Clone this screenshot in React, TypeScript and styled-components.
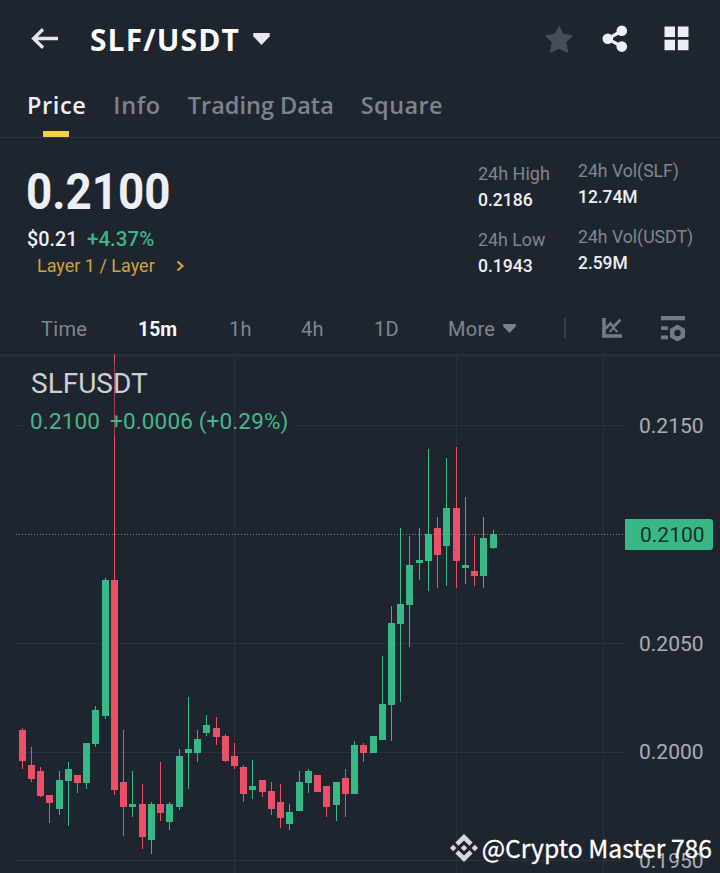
import React from "react";
import styled, { createGlobalStyle } from "styled-components";

const color = {
  bg: "#1f252f",
  white: "#eceff5",
  muted: "#7f8591",
  dim: "#474d59",
  green: "#38b886",
  red: "#ea5066",
  gold: "#cfa33c",
  yellow: "#f3d149",
  grid: "#2b313b",
};

const GlobalStyle = createGlobalStyle`
  * { box-sizing: border-box; }
  body { margin: 0; background: ${color.bg}; }
`;

const Screen = styled.main`
  position: relative;
  display: flex;
  flex-direction: column;
  width: 720px;
  height: 873px;
  overflow: hidden;
  background: ${color.bg};
  color: ${color.white};
  font-family: Roboto, "Liberation Sans", sans-serif;
`;

const Header = styled.header`
  display: flex;
  align-items: center;
  flex: none;
  height: 78px;
  padding: 0 31px;
`;

const Title = styled.h1`
  margin: 2px 14px 0 31px;
  font: 700 30px/40px "Open Sans", sans-serif;
  letter-spacing: 1.1px;
  width: 149px;
  white-space: nowrap;
  color: #fbfcfe;
`;

const HeaderActions = styled.div`
  display: flex;
  align-items: center;
  gap: 28px;
  margin: 0 0 1px auto;

  & > :last-child {
    margin-left: 7px;
  }
`;

const Tabs = styled.nav`
  display: flex;
  flex: none;
  gap: 27px;
  height: 60px;
  padding: 12px 27px 0;
  border-bottom: 1px solid #303641;
`;

const Tab = styled.div<{ $active?: boolean; $spacing?: number }>`
  display: flex;
  flex-direction: column;
  align-items: center;
  justify-content: space-between;
  height: 47px;
  font: 600 23.5px/31px "Open Sans", sans-serif;
  letter-spacing: ${(p) => p.$spacing ?? 0}px;
  color: ${(p) => (p.$active ? color.white : "#7c828e")};
`;

const TabMarker = styled.span`
  width: 26px;
  height: 6px;
  margin-right: 2px;
  background: ${color.yellow};
`;

const Ticker = styled.section`
  display: flex;
  flex: none;
  justify-content: space-between;
  height: 164px;
  padding: 24px 24px 0 27px;
`;

const Quote = styled.div`
  display: flex;
  flex-direction: column;
`;

const Condensed = styled.span<{ $scale: number }>`
  display: inline-block;
  transform: scaleX(${(p) => p.$scale});
  transform-origin: left center;
`;

const LastPrice = styled.div`
  height: 65px;
  margin-left: -1px;
  font-size: 50px;
  font-weight: 700;
  line-height: 61px;
`;

const QuoteRow = styled.div`
  display: grid;
  grid-template-columns: 60px auto;
  height: 24px;
  margin-bottom: 3px;
  font-size: 21px;
  font-weight: 500;
  line-height: 24px;
`;

const Change = styled.span`
  color: ${color.green};
`;

const Sector = styled.div`
  display: flex;
  align-items: center;
  gap: 21px;
  height: 24px;
  padding-left: 10px;
  font-size: 18px;
  line-height: 24px;
  color: ${color.gold};
`;

const Stats = styled.div`
  display: grid;
  grid-template-columns: 100px 118px;
`;

const StatColumn = styled.div<{ $lift?: boolean }>`
  display: flex;
  flex-direction: column;
  gap: 16px;
  margin-top: ${(p) => (p.$lift ? -3 : 0)}px;
`;

const Stat = styled.div`
  height: 50px;
  white-space: nowrap;
`;

const StatLabel = styled.div`
  height: 26px;
  font-size: 18px;
  line-height: 24px;
  color: ${color.muted};
`;

const StatValue = styled.div`
  font-size: 18.5px;
  font-weight: 500;
  line-height: 24px;
`;

const Toolbar = styled.div`
  display: flex;
  align-items: center;
  flex: none;
  height: 52px;
  padding: 1px 0 0 41px;
  font-size: 20px;
  line-height: 24px;
  color: ${color.muted};
`;

const Interval = styled.div<{ $width: number; $active?: boolean }>`
  display: flex;
  align-items: center;
  gap: 8px;
  width: ${(p) => p.$width}px;
  font-weight: ${(p) => (p.$active ? 700 : 400)};
  letter-spacing: ${(p) => (p.$active ? 0 : 0.3)}px;
  color: ${(p) => (p.$active ? "#f4f6fa" : "inherit")};
`;

const Divider = styled.div`
  width: 2px;
  height: 20px;
  margin: 0 36px 1px 0;
  background: #363c47;
`;

const ToolIcons = styled.div`
  display: flex;
  align-items: center;
  gap: 38px;
`;

const ChartArea = styled.section`
  position: relative;
  flex: none;
  height: 519px;
`;

const Legend = styled.div`
  position: absolute;
  top: 12px;
  left: 30px;
  white-space: pre;
`;

const Symbol = styled.div`
  height: 37px;
  padding-left: 1px;
  font-size: 28px;
  line-height: 36px;
  color: #cdd0d6;
`;

const LegendValues = styled.div`
  display: grid;
  grid-template-columns: 80px auto;
  font-size: 22.5px;
  line-height: 36px;
  letter-spacing: 0.15px;
  color: #45b78a;
`;

const Watermark = styled.div`
  position: absolute;
  right: 8px;
  bottom: 8px;
  display: flex;
  align-items: center;
  gap: 4px;
  font: 400 24.7px/36px "Noto Sans CJK SC", sans-serif;
  white-space: nowrap;
  color: #fff;
  -webkit-text-stroke: 0.3px #fff;

  svg {
    margin-top: 2px;
  }
`;

type Candle = [x: number, dir: "u" | "d", high: number, top: number, bottom: number, low: number];

const candles: Candle[] = [
  [22.5, "d", 728, 730, 761, 769],
  [31.5, "d", 747, 765, 779, 782],
  [40.5, "d", 767, 771, 796, 797],
  [49.5, "d", 795, 795, 803, 823],
  [59.5, "u", 771, 780, 809, 815],
  [68.5, "u", 762, 769, 781, 826],
  [77.5, "d", 775, 775, 783, 793],
  [86.5, "u", 743, 743, 783, 789],
  [95.5, "u", 706, 710, 744, 747],
  [105.5, "u", 578, 580, 716, 719],
  [114.5, "d", 354, 580, 790, 795],
  [123.5, "d", 730, 782, 807, 836],
  [132.5, "u", 771, 804, 807, 817],
  [142.5, "d", 784, 804, 837, 849],
  [151.5, "u", 802, 804, 840, 854],
  [160.5, "d", 762, 804, 813, 821],
  [169.5, "u", 802, 804, 822, 830],
  [179.5, "u", 749, 756, 807, 810],
  [188.5, "u", 697, 749, 753, 789],
  [197.5, "u", 730, 739, 753, 762],
  [206.5, "u", 715, 725, 733, 736],
  [216.5, "d", 717, 728, 737, 745],
  [225.5, "d", 734, 736, 761, 762],
  [234.5, "d", 743, 756, 766, 769],
  [243.5, "d", 765, 767, 794, 802],
  [252.5, "u", 760, 786, 790, 799],
  [262.5, "d", 780, 780, 792, 797],
  [271.5, "d", 782, 791, 809, 815],
  [280.5, "d", 784, 802, 818, 828],
  [289.5, "u", 804, 812, 824, 830],
  [299.5, "u", 771, 782, 811, 811],
  [308.5, "u", 769, 771, 783, 793],
  [317.5, "d", 775, 775, 792, 792],
  [326.5, "d", 786, 786, 807, 817],
  [336.5, "u", 782, 782, 805, 821],
  [345.5, "d", 769, 778, 794, 817],
  [354.5, "u", 741, 745, 794, 794],
  [363.5, "d", 743, 745, 753, 762],
  [373.5, "u", 736, 736, 753, 753],
  [382.5, "u", 656, 704, 740, 740],
  [391.5, "u", 606, 623, 705, 741],
  [400.5, "u", 528, 604, 624, 702],
  [409.5, "u", 536, 565, 605, 647],
  [419.5, "u", 528, 560, 563, 580],
  [428.5, "u", 449, 534, 561, 591],
  [437.5, "d", 517, 528, 555, 588],
  [446.5, "u", 458, 508, 546, 586],
  [456.5, "d", 447, 508, 561, 588],
  [465.5, "u", 497, 565, 568, 584],
  [474.5, "d", 536, 571, 576, 586],
  [483.5, "u", 517, 538, 576, 588],
  [493.5, "u", 530, 534, 548, 549],
];

const levels: [y: number, label: string][] = [
  [425.5, "0.2150"],
  [643.5, "0.2050"],
  [751.5, "0.2000"],
  [860.5, "0.1950"],
];

const Caret = ({ width, height, fill }: { width: number; height: number; fill: string }) => (
  <svg width={width} height={height} viewBox="0 0 17 12" preserveAspectRatio="none" fill={fill}>
    <path d="M0.3 0h16.4v3.2L8.5 12 .3 3.2z" />
  </svg>
);

const BackIcon = () => (
  <svg width="28" height="22" viewBox="0 0 28 22" fill="none" stroke="#e3e6ec" strokeWidth="3.3">
    <path d="M27 10.5H3M12 1.3L2.6 10.5l9.4 9.2" />
  </svg>
);

const StarIcon = () => (
  <svg width="28" height="28" viewBox="0 0 28 28" fill={color.dim} stroke={color.dim} strokeWidth="2" strokeLinejoin="round">
    <path d="M14 2.5l3.7 7.4 8.8 1-6.3 6.2 1.8 9.4-8-4-8 4 1.8-9.4-6.3-6.2 8.8-1z" />
  </svg>
);

const ShareIcon = () => (
  <svg width="28" height="28" viewBox="0 0 28 28" fill={color.white}>
    <path d="M20.5 6L7 13.8l13.5 7.7" fill="none" stroke={color.white} strokeWidth="3.2" />
    <circle cx="6.8" cy="13.8" r="5.3" />
    <circle cx="20.8" cy="5.8" r="5.3" />
    <circle cx="20.8" cy="21.6" r="5.3" />
  </svg>
);

const GridIcon = () => (
  <svg width="25" height="25" viewBox="0 0 25 25" fill={color.white}>
    <path d="M.5.5H11V11H.5zM13.8.5h10.7V11H13.8zM.5 13.8H11v10.4H.5zM13.8 13.8h10.7v10.4H13.8z" />
  </svg>
);

const LineChartIcon = () => (
  <svg width="20" height="22" viewBox="0 0 20 22" fill="none" stroke="#747a86">
    <path d="M2 0v18h18" strokeWidth="3.6" />
    <path d="M3.5 10.5l5-5 3 3.5 7-7.5" strokeWidth="2.6" />
    <path d="M7.5 14l4-4 4 4" strokeWidth="1.8" />
  </svg>
);

const IndicatorIcon = () => (
  <svg width="26" height="26" viewBox="0 0 26 26" fill="#747a86">
    <path d="M1 0h24v4.3H1zM1 10.2h7v3.8H1zM1 19.5h7v3.8H1z" />
    <path fillRule="evenodd" d="M17.5 8.6l7.5 4.3v8.3l-7.5 4.3-7.5-4.3v-8.3zM17.5 13.8a3.2 3.2 0 1 0 0 6.4 3.2 3.2 0 0 0 0-6.4z" />
  </svg>
);

const BrandMark = () => (
  <svg width="28" height="28" viewBox="0 0 28 28" fill="#d5d8de">
    <path d="M14 0l8.6 8.6-3.2 3.2L14 6.4l-5.4 5.4-3.2-3.2zM14 28l8.6-8.6-3.2-3.2L14 21.6l-5.4-5.4-3.2 3.2zM14 10.8l3.2 3.2-3.2 3.2-3.2-3.2zM3.2 10.8L6.4 14l-3.2 3.2L0 14zM24.8 10.8L28 14l-3.2 3.2-3.2-3.2z" />
  </svg>
);

const Chart = () => (
  <svg width="720" height="519" viewBox="0 354 720 519" display="block">
    <g stroke={color.grid} strokeWidth="1">
      {[234.5, 456.5, 603.5].map((x) => (
        <line key={x} x1={x} x2={x} y1="354" y2="873" />
      ))}
      <path d="M16 425.5h8M296 425.5h328M16 643.5h608M16 752.5h608M16 860.5h608" />
    </g>
    <rect x="0" y="354" width="720" height="3" fill="#272d36" />
    <line x1="16" x2="624" y1="534.5" y2="534.5" stroke="#5d9a8a" strokeDasharray="1 2" />
    {candles.map(([x, dir, high, top, bottom, low]) => {
      const fill = dir === "u" ? color.green : color.red;
      return (
        <g key={x} fill={fill}>
          <rect x={x - 0.5} y={high} width="1" height={low - high} />
          <rect x={x - 3.5} y={top} width="7" height={bottom - top} />
        </g>
      );
    })}
    <rect x="112" y="362" width="5" height="74" fill={color.bg} opacity="0.35" />
    <g fill="#a9adb5" fontSize="21" fontFamily="Roboto, sans-serif">
      {levels.map(([y, label]) => (
        <text key={label} x="639" y={y + 7.5}>
          {label}
        </text>
      ))}
    </g>
    <path d="M625 519h85a3 3 0 0 1 3 3v25a3 3 0 0 1-3 3h-85z" fill={color.green} />
    <text x="640" y="542" fontSize="21" fontFamily="Roboto, sans-serif" fill="#123329">
      0.2100
    </text>
  </svg>
);

const columns = [
  [
    { label: "24h High", labelScale: 1, value: "0.2186", valueScale: 0.95 },
    { label: "24h Low", labelScale: 0.99, value: "0.1943", valueScale: 0.95 },
  ],
  [
    { label: "24h Vol(SLF)", labelScale: 0.98, value: "12.74M", valueScale: 0.94 },
    { label: "24h Vol(USDT)", labelScale: 0.98, value: "2.59M", valueScale: 0.94 },
  ],
];

export default function App() {
  return (
    <>
      <GlobalStyle />
      <Screen>
        <Header>
          <BackIcon />
          <Title>SLF/USDT</Title>
          <Caret width={17} height={12} fill="#e6e9ef" />
          <HeaderActions>
            <StarIcon />
            <ShareIcon />
            <GridIcon />
          </HeaderActions>
        </Header>

        <Tabs>
          <Tab $active $spacing={0.6}>
            Price
            <TabMarker />
          </Tab>
          <Tab $spacing={0.6}>Info</Tab>
          <Tab>Trading Data</Tab>
          <Tab $spacing={0.4}>Square</Tab>
        </Tabs>

        <Ticker>
          <Quote>
            <LastPrice>
              <Condensed $scale={0.915}>0.2100</Condensed>
            </LastPrice>
            <QuoteRow>
              <Condensed $scale={0.94}>$0.21</Condensed>
              <Change>
                <Condensed $scale={0.98}>+4.37%</Condensed>
              </Change>
            </QuoteRow>
            <Sector>
              Layer 1 / Layer
              <svg width="9" height="12" viewBox="0 0 9 12" fill="none" stroke={color.gold} strokeWidth="2.2">
                <path d="M1.5 1.5L6.5 6l-5 4.5" />
              </svg>
            </Sector>
          </Quote>
          <Stats>
            {columns.map((stats, i) => (
              <StatColumn key={i} $lift={i === 1}>
                {stats.map((s) => (
                  <Stat key={s.label}>
                    <StatLabel>
                      <Condensed $scale={s.labelScale}>{s.label}</Condensed>
                    </StatLabel>
                    <StatValue>
                      <Condensed $scale={s.valueScale}>{s.value}</Condensed>
                    </StatValue>
                  </Stat>
                ))}
              </StatColumn>
            ))}
          </Stats>
        </Ticker>

        <Toolbar>
          <Interval $width={97}>Time</Interval>
          <Interval $width={91} $active>
            <Condensed $scale={0.97}>15m</Condensed>
          </Interval>
          <Interval $width={72}>1h</Interval>
          <Interval $width={73}>4h</Interval>
          <Interval $width={74}>1D</Interval>
          <Interval $width={116}>
            More
            <Caret width={13} height={9} fill="#7b818c" />
          </Interval>
          <Divider />
          <ToolIcons>
            <LineChartIcon />
            <IndicatorIcon />
          </ToolIcons>
        </Toolbar>

        <ChartArea>
          <Chart />
          <Legend>
            <Symbol>SLFUSDT</Symbol>
            <LegendValues>
              <span>0.2100</span>
              <span>+0.0006 (+0.29%)</span>
            </LegendValues>
          </Legend>
          <Watermark>
            <BrandMark />
            @Crypto Master 786
          </Watermark>
        </ChartArea>
      </Screen>
    </>
  );
}
